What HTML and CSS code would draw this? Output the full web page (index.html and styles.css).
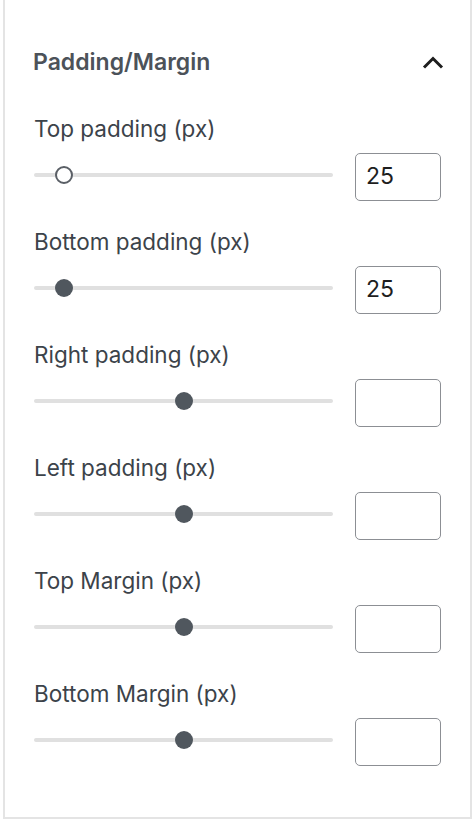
FILE: index.html
```html
<!DOCTYPE html>
<html lang="en">
<head>
<meta charset="utf-8">
<title>Padding/Margin</title>
<link rel="stylesheet" href="styles.css">
</head>
<body>
<div class="panel">
  <div class="panel-header">
    <h2 class="panel-title">Padding/Margin</h2>
    <svg class="chevron" width="22" height="13" viewBox="0 0 22 13" aria-hidden="true">
      <polyline points="2,11.5 11,2.5 20,11.5" fill="none" stroke="#1e1e1e" stroke-width="3"/>
    </svg>
  </div>

  <div class="field">
    <label class="field-label">Top padding (px)</label>
    <div class="field-row">
      <div class="slider"><div class="track"></div><span class="thumb thumb-hollow" style="left: 10%"></span></div>
      <div class="num">25</div>
    </div>
  </div>

  <div class="field">
    <label class="field-label">Bottom padding (px)</label>
    <div class="field-row">
      <div class="slider"><div class="track"></div><span class="thumb" style="left: 10%"></span></div>
      <div class="num">25</div>
    </div>
  </div>

  <div class="field">
    <label class="field-label">Right padding (px)</label>
    <div class="field-row">
      <div class="slider"><div class="track"></div><span class="thumb" style="left: 50%"></span></div>
      <div class="num"></div>
    </div>
  </div>

  <div class="field">
    <label class="field-label">Left padding (px)</label>
    <div class="field-row">
      <div class="slider"><div class="track"></div><span class="thumb" style="left: 50%"></span></div>
      <div class="num"></div>
    </div>
  </div>

  <div class="field">
    <label class="field-label">Top Margin (px)</label>
    <div class="field-row">
      <div class="slider"><div class="track"></div><span class="thumb" style="left: 50%"></span></div>
      <div class="num"></div>
    </div>
  </div>

  <div class="field">
    <label class="field-label">Bottom Margin (px)</label>
    <div class="field-row">
      <div class="slider"><div class="track"></div><span class="thumb" style="left: 50%"></span></div>
      <div class="num"></div>
    </div>
  </div>
</div>
</body>
</html>
```

FILE: styles.css
```css
* { box-sizing: border-box; }
html, body {
  margin: 0;
  padding: 0;
  background: #fff;
}
body {
  font-family: Inter, "Liberation Sans", sans-serif;
  width: 474px;
  height: 822px;
  overflow: hidden;
}
.panel {
  margin-left: 3px;
  width: 469px;
  height: 819px;
  border-left: 2px solid #e4e4e4;
  border-right: 2px solid #e4e4e4;
  border-bottom: 2px solid #e4e4e4;
  padding: 50px 29px 0 28px;
}
.panel-header {
  display: flex;
  align-items: center;
  justify-content: space-between;
  height: 24px;
  margin-bottom: 43px;
}
.panel-title {
  margin: 0;
  font-size: 23px;
  line-height: 24px;
  font-weight: 600;
  color: #4c5259;
}
.chevron {
  display: block;
  margin-right: -3px;
}
.field {
  margin-bottom: 29px;
}
.field-label {
  display: block;
  font-size: 22.5px;
  line-height: 24px;
  color: #3c434a;
  margin-bottom: 12px;
  margin-left: 1px;
}
.field-row {
  display: flex;
  align-items: center;
  gap: 22px;
}
.slider {
  position: relative;
  flex: 1;
  height: 48px;
  margin-left: 1px;
}
.track {
  position: absolute;
  left: 0;
  right: 0;
  top: 20px;
  height: 4px;
  border-radius: 2px;
  background: #e0e0e0;
}
.thumb {
  position: absolute;
  top: 13px;
  width: 18px;
  height: 18px;
  margin-left: -9px;
  border-radius: 50%;
  background: #50575e;
}
.thumb-hollow {
  background: #fff;
  border: 2px solid #5a5f66;
}
.num {
  width: 86px;
  height: 48px;
  border: 1.5px solid #8c8f94;
  border-radius: 5px;
  padding-left: 10px;
  font-size: 23px;
  line-height: 45px;
  color: #1e1e1e;
}
```
